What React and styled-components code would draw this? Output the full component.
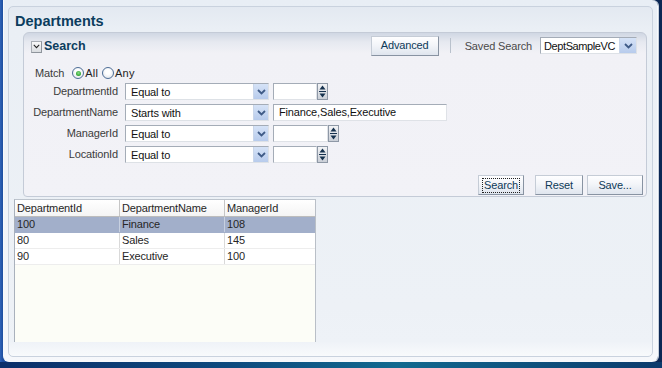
import React from 'react';
import styled, { createGlobalStyle } from 'styled-components';

const Global = createGlobalStyle`
  html, body { margin: 0; padding: 0; }
  body {
    background: #0c2b5c;
    font-family: "Liberation Sans", Arial, sans-serif;
    font-size: 11px;
    letter-spacing: -0.15px;
    color: #333;
  }
`;

const Screen = styled.div`
  width: 662px;
  height: 368px;
  overflow: hidden;
  display: flex;
  flex-direction: column;
  background: linear-gradient(to right, #2f63b8 0, #1d4e9e 3px, #133b7c 30%, #0b2754 100%);
`;

const Window = styled.div`
  box-sizing: border-box;
  margin: 0 4px 0 3px;
  height: 362px;
  flex: none;
  padding: 6px 4px 4px 4px;
  background: linear-gradient(#e8eef5, #f1f4f8 60%, #f6f8fb);
  border: 1px solid #f7f9fc;
  border-top: none;
  border-radius: 0 6px 6px 6px;
  box-shadow: 1px 0 0 #c6cfdb;
`;

const BottomStrip = styled.div`
  flex: 1;
  background: linear-gradient(to right, #0b2f6a 0, #0d4a7e 35%, #11698f 60%, #0b3a6c 100%);
`;

const Panel = styled.div`
  box-sizing: border-box;
  height: 351px;
  border: 1px solid #c9d2de;
  border-radius: 5px;
  background: linear-gradient(#e3e9f1 0, #eaeff5 22px, #edf1f6 300px, #eef2f7 334px, #f8fafc 100%);
  display: flex;
  flex-direction: column;
`;

const Title = styled.div`
  box-sizing: border-box;
  height: 25px;
  padding: 3px 0 0 6px;
  line-height: 22px;
  font-size: 14.5px;
  letter-spacing: 0;
  font-weight: bold;
  color: #0c3d5e;
`;

const SearchBox = styled.div`
  box-sizing: border-box;
  margin-left: 14px;
  width: 624px;
  height: 165px;
  border: 1px solid #c4cbd7;
  border-radius: 6px 6px 4px 4px;
  background: linear-gradient(#d0d7e3 0, #e6e9f0 9px, #f1f1f6 20px, #f2f2f7 100%);
  display: flex;
  flex-direction: column;
`;

const SearchHeader = styled.div`
  height: 25px;
  display: flex;
  align-items: center;
  padding: 0 9px 0 7px;
`;

const Disclosure = styled.span`
  box-sizing: border-box;
  width: 11px;
  height: 12px;
  margin-top: 2px;
  border: 1px solid #a9aeb5;
  border-right-color: #8e949c;
  border-bottom-color: #8e949c;
  background: linear-gradient(#fafafa, #d9dce0);
  display: flex;
  align-items: center;
  justify-content: center;
`;

const SearchTitle = styled.span`
  margin-left: 2px;
  font-size: 12.5px;
  letter-spacing: 0;
  font-weight: bold;
  color: #0c3d5e;
`;

const Spacer = styled.span`
  flex: 1;
`;

const Button = styled.button`
  box-sizing: border-box;
  height: 20px;
  width: ${p => p.$w}px;
  margin-left: ${p => p.$ml || 0}px;
  padding: 0;
  font-family: inherit;
  font-size: 11px;
  letter-spacing: inherit;
  color: #0e3a58;
  border: 1px solid #c5ccd6;
  border-right-color: #8893a2;
  border-bottom-color: #8893a2;
  background: linear-gradient(#fefeff 0, #f3f5f9 45%, #dfe5ee 100%);
  display: flex;
  align-items: center;
  justify-content: center;
`;

const ButtonLabel = styled.span`
  padding: 0 1px;
  line-height: 13px;
  border: 1px dotted ${p => (p.$focus ? '#222' : 'transparent')};
`;

const Separator = styled.span`
  width: 1px;
  height: 15px;
  margin: 0 14px 0 11px;
  background: #b9c1cc;
`;

const SavedLabel = styled.span`
  color: #4a4a4a;
  margin-right: 8px;
`;

const SelectBox = styled.div`
  box-sizing: border-box;
  width: ${p => p.$w}px;
  height: 17px;
  background: #fff;
  border: 1px solid #a4acb7;
  border-right-color: #dde1e6;
  border-bottom-color: #dde1e6;
  display: flex;
  align-items: center;
  color: #111;
`;

const SelectText = styled.span`
  flex: 1;
  padding-left: ${p => p.$pl || 5}px;
  letter-spacing: ${p => (p.$tight ? '-0.4px' : 'inherit')};
  white-space: nowrap;
  overflow: hidden;
`;

const DropButton = styled.span`
  box-sizing: border-box;
  width: ${p => p.$w || 15}px;
  height: 15px;
  background: linear-gradient(#d6e3f7, #b7cbec);
  border-left: 1px solid #c9d6ea;
  display: flex;
  align-items: center;
  justify-content: center;
`;

const MatchRow = styled.div`
  height: 18px;
  margin-top: 6px;
  padding-left: 11px;
  display: flex;
  align-items: center;
  color: #3c3c3c;
`;

const RadioCircle = styled.span`
  box-sizing: border-box;
  width: 12px;
  height: 12px;
  border-radius: 50%;
  border: 1px solid #4d6d96;
  background: radial-gradient(circle at 50% 40%, #ffffff 30%, #d9dee6 100%);
  margin-left: ${p => p.$ml}px;
  display: flex;
  align-items: center;
  justify-content: center;
`;

const RadioDot = styled.span`
  width: 5px;
  height: 5px;
  border-radius: 50%;
  background: radial-gradient(circle at 50% 40%, #8ee08e 0, #2ea12e 70%);
`;

const RadioText = styled.span`
  margin-left: 1px;
  letter-spacing: 0.2px;
  color: #222;
`;

const Form = styled.div`
  margin-top: 1px;
  display: grid;
  grid-template-columns: 94px auto;
  column-gap: 7px;
  row-gap: 4px;
  justify-content: start;
`;

const FieldLabel = styled.span`
  height: 17px;
  line-height: 17px;
  text-align: right;
  color: #3c3c3c;
  white-space: nowrap;
`;

const Controls = styled.div`
  display: flex;
  align-items: center;
  height: 17px;
`;

const TextInput = styled.div`
  box-sizing: border-box;
  width: ${p => p.$w}px;
  height: 17px;
  margin-left: 4px;
  background: #fff;
  border: 1px solid #a4acb7;
  border-right-color: #dfe2e7;
  border-bottom-color: #dfe2e7;
  padding-left: 5px;
  line-height: 15px;
  color: #111;
  white-space: nowrap;
`;

const ButtonRow = styled.div`
  margin-top: 12px;
  display: flex;
  justify-content: flex-end;
  padding-right: 3px;
`;

const Grid = styled.div`
  box-sizing: border-box;
  margin: 2px 0 0 5px;
  width: 302px;
  height: 143px;
  border-top: 1px solid #bdc4cd;
  border-left: 1px solid #a9b1bc;
  border-right: 1px solid #b9bfc7;
  background: #fcfdf7;
`;

const GridRow = styled.div`
  display: grid;
  grid-template-columns: 105px 105px 90px;
  height: ${p => (p.$head ? 17 : 16)}px;
  background: ${p => (p.$head ? 'linear-gradient(#ffffff, #f4f4f4)' : p.$sel ? '#a2afca' : '#ffffff')};
  border-bottom: 1px solid ${p => (p.$head ? '#bcbcbc' : p.$sel ? '#a2afca' : '#ededed')};
  box-sizing: border-box;
`;

const Cell = styled.div`
  box-sizing: border-box;
  padding-left: 2px;
  line-height: ${p => (p.$head ? 16 : 15)}px;
  color: #262626;
  white-space: nowrap;
  border-right: 1px solid ${p => (p.$last ? 'transparent' : p.$head ? '#c6c6c6' : p.$sel ? '#c7d0e0' : '#d9d9d9')};
`;

const Chevron = ({ color = '#3f5b87', w = 9, h = 6, sw = 1.8 }) => (
  <svg width={w} height={h} viewBox="0 0 9 6">
    <polyline points="1,1 4.5,4.5 8,1" fill="none" stroke={color} strokeWidth={sw} />
  </svg>
);

const Spinner = () => (
  <svg width="11" height="17" viewBox="0 0 11 17">
    <defs>
      <linearGradient id="sg" x1="0" y1="0" x2="0" y2="1">
        <stop offset="0" stopColor="#f4f5f7" />
        <stop offset="1" stopColor="#c9ced6" />
      </linearGradient>
    </defs>
    <rect x="0.5" y="0.5" width="10" height="16" fill="url(#sg)" stroke="#8e98a6" />
    <polygon points="2.5,6.5 5.5,2.5 8.5,6.5" fill="#16324f" />
    <line x1="2" y1="8.5" x2="9" y2="8.5" stroke="#16324f" strokeWidth="1" />
    <polygon points="2.5,10.5 8.5,10.5 5.5,14.5" fill="#16324f" />
  </svg>
);

const Select = ({ text, w = 144 }) => (
  <SelectBox $w={w}>
    <SelectText>{text}</SelectText>
    <DropButton>
      <Chevron />
    </DropButton>
  </SelectBox>
);

const NumberField = ({ w }) => (
  <>
    <TextInput $w={w} />
    <Spinner />
  </>
);

const rows = [
  { label: 'DepartmentId', op: 'Equal to', kind: 'num', w: 44 },
  { label: 'DepartmentName', op: 'Starts with', kind: 'text', w: 174, value: 'Finance,Sales,Executive' },
  { label: 'ManagerId', op: 'Equal to', kind: 'num', w: 55 },
  { label: 'LocationId', op: 'Equal to', kind: 'num', w: 44 },
];

const data = [
  ['100', 'Finance', '108'],
  ['80', 'Sales', '145'],
  ['90', 'Executive', '100'],
];

export default function App() {
  return (
    <>
      <Global />
      <Screen>
        <Window>
          <Panel>
            <Title>Departments</Title>
            <SearchBox>
              <SearchHeader>
                <Disclosure>
                  <Chevron color="#222" w={7} h={5} sw={1.3} />
                </Disclosure>
                <SearchTitle>Search</SearchTitle>
                <Spacer />
                <Button $w={68}>
                  <ButtonLabel>Advanced</ButtonLabel>
                </Button>
                <Separator />
                <SavedLabel>Saved Search</SavedLabel>
                <SelectBox $w={97}>
                  <SelectText $pl={3} $tight>DeptSampleVC</SelectText>
                  <DropButton $w={17}>
                    <Chevron />
                  </DropButton>
                </SelectBox>
              </SearchHeader>
              <MatchRow>
                Match
                <RadioCircle $ml={8}>
                  <RadioDot />
                </RadioCircle>
                <RadioText>All</RadioText>
                <RadioCircle $ml={4} />
                <RadioText>Any</RadioText>
              </MatchRow>
              <Form>
                {rows.map(r => (
                  <React.Fragment key={r.label}>
                    <FieldLabel>{r.label}</FieldLabel>
                    <Controls>
                      <Select text={r.op} />
                      {r.kind === 'num' ? (
                        <NumberField w={r.w} />
                      ) : (
                        <TextInput $w={r.w}>{r.value}</TextInput>
                      )}
                    </Controls>
                  </React.Fragment>
                ))}
              </Form>
              <ButtonRow>
                <Button $w={46}>
                  <ButtonLabel $focus>Search</ButtonLabel>
                </Button>
                <Button $w={48} $ml={11}>
                  <ButtonLabel>Reset</ButtonLabel>
                </Button>
                <Button $w={56} $ml={4}>
                  <ButtonLabel>Save...</ButtonLabel>
                </Button>
              </ButtonRow>
            </SearchBox>
            <Grid>
              <GridRow $head>
                <Cell $head>DepartmentId</Cell>
                <Cell $head>DepartmentName</Cell>
                <Cell $head $last>ManagerId</Cell>
              </GridRow>
              {data.map((d, i) => (
                <GridRow key={d[0]} $sel={i === 0}>
                  <Cell $sel={i === 0}>{d[0]}</Cell>
                  <Cell $sel={i === 0}>{d[1]}</Cell>
                  <Cell $sel={i === 0} $last>{d[2]}</Cell>
                </GridRow>
              ))}
            </Grid>
          </Panel>
        </Window>
        <BottomStrip />
      </Screen>
    </>
  );
}
